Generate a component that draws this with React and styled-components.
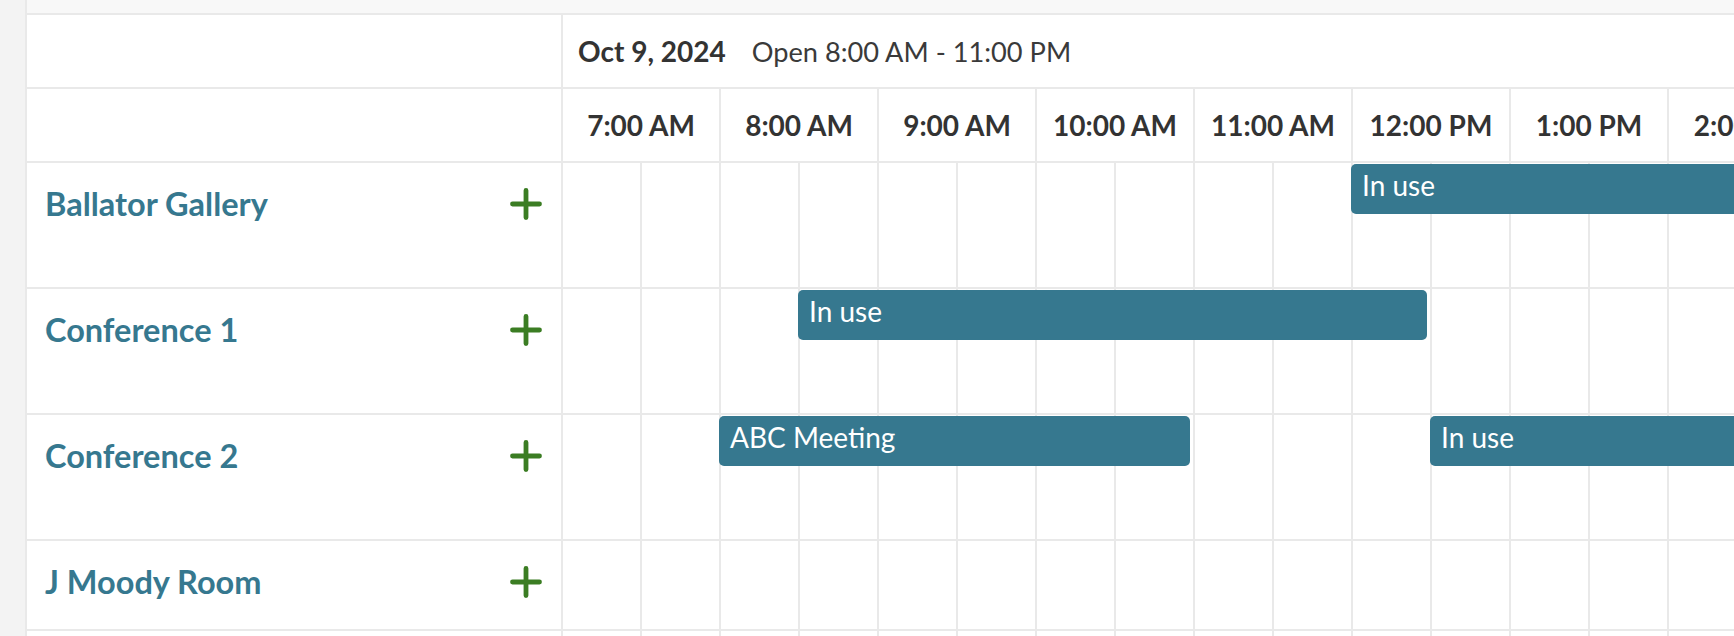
import React from 'react';
import styled, { createGlobalStyle } from 'styled-components';

const LINE = '#e9e9e9';
const TEAL = '#36788f';
const HALF = 79;

const GlobalStyle = createGlobalStyle`
  * { box-sizing: border-box; }
  html, body { margin: 0; padding: 0; background: #fff; }
  body { font-family: Lato, "Open Sans", sans-serif; overflow: hidden; }
`;

const Page = styled.div`
  display: flex;
  width: 1734px;
  height: 636px;
  overflow: hidden;
`;

const Sidebar = styled.div`
  flex: none;
  width: 27px;
  background: #f3f3f3;
  border-right: 2px solid ${LINE};
`;

const Main = styled.div`
  flex: 1;
  min-width: 0;
  display: flex;
  flex-direction: column;
  overflow: hidden;
`;

const TopStrip = styled.div`
  flex: none;
  height: 15px;
  background: #f8f8f8;
  border-bottom: 2px solid ${LINE};
`;

const Row = styled.div`
  flex: none;
  display: flex;
  height: ${(p) => p.$height}px;
  border-bottom: 2px solid ${LINE};
`;

const LabelCell = styled.div`
  flex: none;
  width: 536px;
  display: flex;
  align-items: flex-start;
  justify-content: space-between;
  padding: 22px 18px 0 18px;
  border-right: 2px solid ${LINE};
`;

const RoomName = styled.div`
  font-size: 32.5px;
  line-height: 38px;
  font-weight: 700;
  color: ${TEAL};
`;

const AddButton = styled.button`
  width: 34px;
  height: 38px;
  padding: 0;
  border: none;
  background: none;
  display: flex;
  align-items: center;
  justify-content: center;
  cursor: pointer;
`;

const DateCell = styled.div`
  flex: 1;
  display: flex;
  align-items: center;
  gap: 26px;
  padding-left: 15px;
  color: #333;
  white-space: nowrap;
`;

const DateText = styled.span`
  font-size: 28px;
  font-weight: 700;
`;

const HoursText = styled.span`
  font-size: 27.2px;
  font-weight: 400;
  color: #3a3a3a;
`;

const Timeline = styled.div`
  flex: 1;
  min-width: 0;
  display: flex;
  position: relative;
`;

const HourCell = styled.div`
  flex: none;
  width: ${HALF * 2}px;
  display: flex;
  align-items: center;
  justify-content: center;
  border-right: 2px solid ${LINE};
  font-size: 28px;
  font-weight: 700;
  color: #333;
  white-space: nowrap;
`;

const HalfCell = styled.div`
  flex: none;
  width: ${HALF}px;
  border-right: 2px solid ${LINE};
`;

const EventBar = styled.div`
  position: absolute;
  top: 1px;
  height: 50px;
  padding: 3px 11px 0;
  background: ${TEAL};
  border-radius: 5px;
  color: #fff;
  font-size: 28px;
  line-height: 36px;
  font-weight: 400;
  white-space: nowrap;
  overflow: hidden;
`;

const hours = [];
for (let h = 7; h <= 23; h++) {
  const suffix = h < 12 ? 'AM' : 'PM';
  const shown = h > 12 ? h - 12 : h;
  hours.push(`${shown}:00 ${suffix}`);
}

// start / end in hours from midnight
const rooms = [
  { name: 'Ballator Gallery', height: 126, events: [{ title: 'In use', start: 12, end: 18 }] },
  { name: 'Conference 1', height: 126, events: [{ title: 'In use', start: 8.5, end: 12.5 }] },
  {
    name: 'Conference 2',
    height: 126,
    events: [
      { title: 'ABC Meeting', start: 8, end: 11 },
      { title: 'In use', start: 12.5, end: 18 },
    ],
  },
  { name: 'J Moody Room', height: 90, events: [] },
  { name: '', height: 126, events: [] },
];

const PlusIcon = () => (
  <svg width="32" height="32" viewBox="0 0 32 32">
    <path d="M16 2.5v27M2.5 16h27" stroke="#3b7d23" strokeWidth="4.8" strokeLinecap="round" fill="none" />
  </svg>
);

const barStyle = (ev) => {
  const from = (ev.start - 7) * 2;
  const span = (ev.end - ev.start) * 2;
  return { left: from * HALF - 2, width: span * HALF - 3 };
};

const App = () => {
  return (
    <>
      <GlobalStyle />
      <Page>
        <Sidebar />
        <Main>
          <TopStrip />
          <Row $height={74}>
            <LabelCell />
            <DateCell>
              <DateText>Oct 9, 2024</DateText>
              <HoursText>Open 8:00 AM - 11:00 PM</HoursText>
            </DateCell>
          </Row>
          <Row $height={74}>
            <LabelCell />
            <Timeline>
              {hours.map((h) => (
                <HourCell key={h}>{h}</HourCell>
              ))}
            </Timeline>
          </Row>
          {rooms.map((room, i) => (
            <Row key={i} $height={room.height}>
              <LabelCell>
                {room.name && (
                  <>
                    <RoomName>{room.name}</RoomName>
                    <AddButton aria-label="Add booking">
                      <PlusIcon />
                    </AddButton>
                  </>
                )}
              </LabelCell>
              <Timeline>
                {hours.map((h) => (
                  <React.Fragment key={h}>
                    <HalfCell />
                    <HalfCell />
                  </React.Fragment>
                ))}
                {room.events.map((ev, j) => (
                  <EventBar key={j} style={barStyle(ev)}>
                    {ev.title}
                  </EventBar>
                ))}
              </Timeline>
            </Row>
          ))}
        </Main>
      </Page>
    </>
  );
};

export default App;
